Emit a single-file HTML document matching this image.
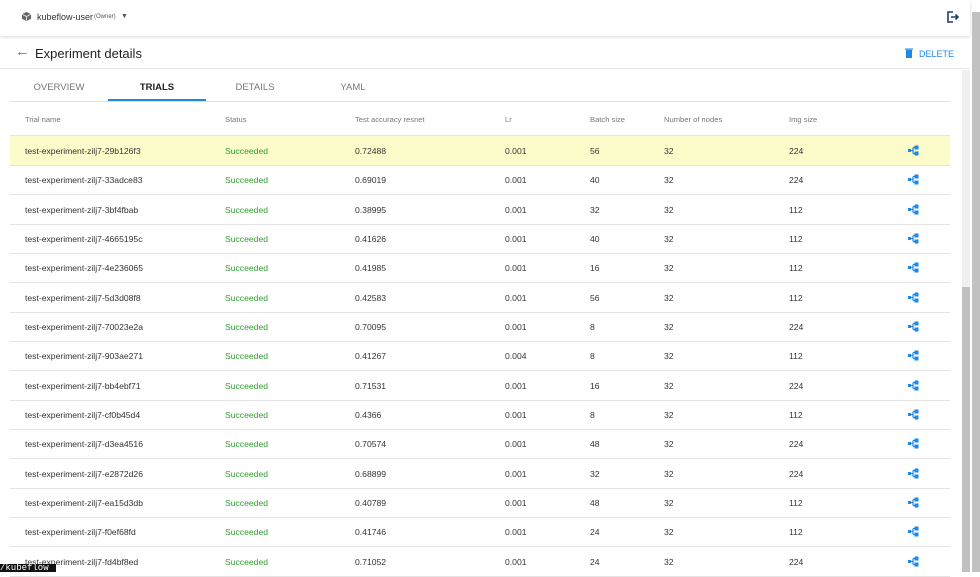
<!DOCTYPE html>
<html><head><style>
body{margin:0;width:980px;height:572px;overflow:hidden;background:#fff;font-family:"Liberation Sans",sans-serif;position:relative}
.top{position:absolute;left:0;top:0;width:970px;height:36px;background:#fff;box-shadow:0 1px 3px rgba(0,0,0,.15)}
.hdr{position:absolute;left:0;top:38px;width:970px;height:30px;border-bottom:1px solid #e6e6e6}
.tabs{position:absolute;left:10px;top:70px;width:940px;height:31px;border-bottom:1px solid #e0e0e0}
.tab{position:absolute;top:12px;font-size:9.5px;color:#777;width:98px;text-align:center}
.row{position:absolute;left:10px;width:940px;height:29px;border-bottom:1px solid #e4e4e4;font-size:8.6px;color:#333}
.row span{position:absolute;top:10px}
.th span{color:#777;font-size:7.6px;top:13px}
.ok{color:#2e9e2e}
svg.i{position:absolute;left:898px;top:9px}
</style></head><body>
<div class="top">
<svg style="position:absolute;left:21px;top:11px" width="11" height="11" viewBox="0 0 12 12"><path d="M6 1L11 3.5V8.5L6 11L1 8.5V3.5Z" fill="#666"/><path d="M1 3.5L6 6L11 3.5M6 6V11" stroke="#fff" stroke-width="0.8" fill="none"/></svg>
<span style="position:absolute;left:37px;top:12px;font-size:9px;color:#333">kubeflow-user</span>
<span style="position:absolute;left:94px;top:14px;font-size:6px;color:#555">(Owner)</span>
<span style="position:absolute;left:121px;top:13px;font-size:7px;color:#555">▼</span>
<svg style="position:absolute;left:946px;top:10px" width="14" height="14" viewBox="0 0 14 14"><path d="M7 2H2V12H7" stroke="#1a3e6e" stroke-width="1.6" fill="none"/><path d="M5 7H12M9.5 4.5L12 7L9.5 9.5" stroke="#1a3e6e" stroke-width="1.6" fill="none"/></svg>
</div>
<div class="hdr">
<span style="position:absolute;left:15px;top:5px;font-size:15px;color:#1e88e5">←</span>
<span style="position:absolute;left:35px;top:8px;font-size:13px;color:#222">Experiment details</span>
<svg style="position:absolute;left:905px;top:10px" width="8" height="10" viewBox="0 0 8 10"><rect x="1" y="2" width="6" height="8" fill="#1e88e5"/><rect x="0" y="0.5" width="8" height="1.2" fill="#1e88e5"/></svg>
<span style="position:absolute;left:919px;top:11px;font-size:9px;color:#1e88e5">DELETE</span>
</div>
<div class="tabs">
<div class="tab" style="left:0">OVERVIEW</div>
<div class="tab" style="left:98px;color:#222;font-weight:bold">TRIALS</div>
<div style="position:absolute;left:98px;top:29px;width:98px;height:2px;background:#1e88e5"></div>
<div class="tab" style="left:196px">DETAILS</div>
<div class="tab" style="left:294px">YAML</div>
</div>
<div id="t"></div>
<div style="position:absolute;left:962px;top:70px;width:8px;height:502px;background:#f0f0f0"></div>
<div style="position:absolute;left:962px;top:287px;width:8px;height:285px;background:#c1c1c1"></div>
<div style="position:absolute;left:972px;top:12px;width:8px;height:560px;background:#c1c1c1"></div>
<div style="position:absolute;left:0;top:564px;width:56px;height:8px;background:#111;color:#fff;font-family:'Liberation Mono',monospace;font-size:9px;line-height:8px;overflow:hidden">/kubeflow</div>
<script>
var d=[["29b126f3","0.72488","0.001",56,224],["33adce83","0.69019","0.001",40,224],["3bf4fbab","0.38995","0.001",32,112],["4665195c","0.41626","0.001",40,112],["4e236065","0.41985","0.001",16,112],["5d3d08f8","0.42583","0.001",56,112],["70023e2a","0.70095","0.001",8,224],["903ae271","0.41267","0.004",8,112],["bb4ebf71","0.71531","0.001",16,224],["cf0b45d4","0.4366","0.001",8,112],["d3ea4516","0.70574","0.001",48,224],["e2872d26","0.68899","0.001",32,224],["ea15d3db","0.40789","0.001",48,112],["f0ef68fd","0.41746","0.001",24,112],["fd4bf8ed","0.71052","0.001",24,224]];
var x=[15,215,345,495,580,654,779];
var h='<div class="row th" style="top:102px;height:33px">';
["Trial name","Status","Test accuracy resnet","Lr","Batch size","Number of nodes","Img size"].forEach(function(t,i){h+='<span style="left:'+x[i]+'px">'+t+'</span>'});
h+='</div>';
var ic='<svg class="i" width="11" height="11" viewBox="0 0 11 11"><rect x="0" y="4" width="3" height="3" fill="#1e88e5"/><path d="M3 5.5H5M5 2.5V8.5M5 2.5H7M5 8.5H7" stroke="#1e88e5" stroke-width="1.2" fill="none"/><rect x="6.5" y="0.5" width="4" height="4" fill="#1e88e5"/><rect x="6.5" y="6.5" width="4" height="4" fill="#1e88e5"/></svg>';
d.forEach(function(r,k){var v=["test-experiment-zilj7-"+r[0],"Succeeded",r[1],r[2],r[3],32,r[4]];
h+='<div class="row" style="top:'+(136+k*29.33)+'px;'+(k==0?'background:#fcfcca':'')+'">';
v.forEach(function(t,i){h+='<span'+(i==1?' class="ok"':'')+' style="left:'+x[i]+'px">'+t+'</span>'});h+=ic+'</div>'});
document.getElementById('t').innerHTML=h;
</script>
</body></html>
